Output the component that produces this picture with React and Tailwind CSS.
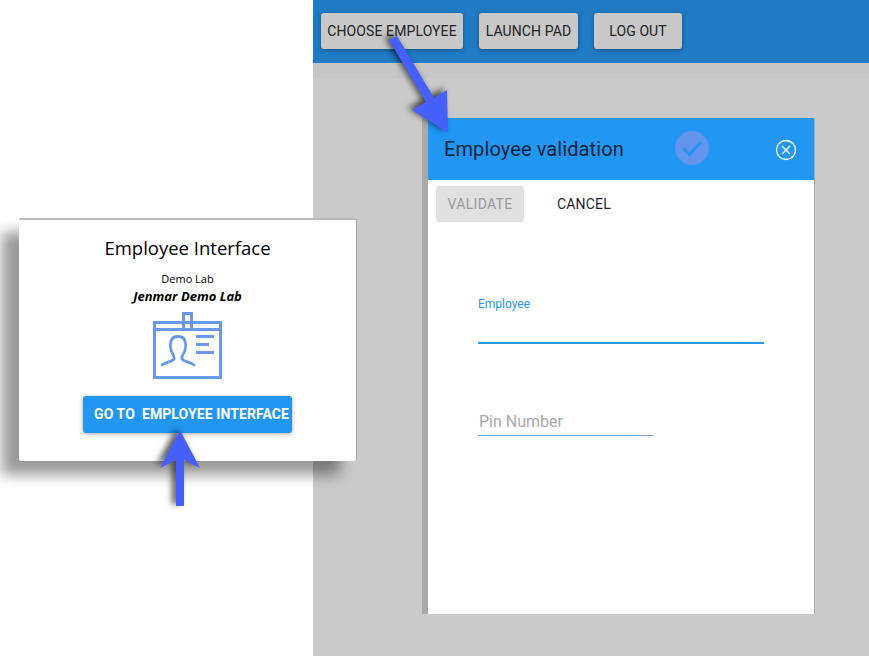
export default function App() {
  const roboto = "font-['Roboto',sans-serif]";
  return (
    <div className={`relative flex h-[656px] w-[869px] overflow-hidden bg-white ${roboto}`}>
      {/* left column with the card */}
      <div className="relative z-10 w-[313px] shrink-0 pl-[19px] pt-[218px]">
        <div className="flex h-[243px] w-[338px] flex-col items-center rounded-[2px] border-t-2 border-r border-t-[#b8b8b8] border-r-[#a8a8a8] bg-white shadow-[-17px_14px_14px_rgba(0,0,0,0.4)]">
          <div className="mt-[14px] font-['Open_Sans',sans-serif] text-[18.5px] leading-[28px] text-black">Employee Interface</div>
          <div className="mt-[9px] font-['Open_Sans',sans-serif] text-[11px] leading-[16px] text-black">Demo Lab</div>
          <div className="mt-[1px] font-['Open_Sans',sans-serif] text-[13px] font-bold italic leading-[16px] text-black">Jenmar Demo Lab</div>
          <svg className="mt-[8px] -ml-[1px]" width="70" height="68" viewBox="0 0 70 68" fill="none" stroke="#6699ee" strokeWidth="3">
            <rect x="2.5" y="10.5" width="66" height="55" />
            <path d="M2 17.5H31M41 17.5H69" />
            <rect x="31.5" y="1.5" width="8" height="16" />
            <path d="M44 24.5H62M44 32.5H57M44 40.5H62" strokeWidth="2.8" />
            <path d="M10 53c4-3 10-3 12-6 1-3-2-5-3-9-1-3-1-6 0-9 1-3 4-4.500 7-4.500s6 1.500 7 4.500c1 3 1 6 0 9-1 4-4 6-3 9 2 3 8 3 12 6" strokeWidth="2.8" strokeLinecap="round" />
          </svg>
          <button className="mt-[16px] flex h-[37px] w-[209px] items-center justify-end whitespace-pre rounded-[3px] bg-[#2196f3] pr-[3px] text-[14px] font-bold tracking-[0.08px] text-white shadow-[0_1px_4px_rgba(0,0,0,0.35)]">
            GO TO  EMPLOYEE INTERFACE
          </button>
        </div>
      </div>

      {/* right panel */}
      <div className="flex h-full flex-1 flex-col bg-[#cacaca]">
        <div className="flex h-[63px] items-start gap-4 bg-[#1f7bc4] pl-2 pt-[13px]">
          <button className="h-[36px] w-[142px] rounded-[3px] bg-[#c8c8c8] text-[14px] font-normal tracking-[0.1px] text-[#222] shadow-[0_1px_4px_rgba(0,0,0,0.35)]">CHOOSE EMPLOYEE</button>
          <button className="h-[36px] w-[99px] rounded-[3px] bg-[#c8c8c8] text-[14px] font-normal tracking-[0.1px] text-[#222] shadow-[0_1px_4px_rgba(0,0,0,0.35)]">LAUNCH PAD</button>
          <button className="h-[36px] w-[88px] rounded-[3px] bg-[#c8c8c8] text-[14px] font-normal tracking-[0.1px] text-[#222] shadow-[0_1px_4px_rgba(0,0,0,0.35)]">LOG OUT</button>
        </div>
        <div className="h-[15px] bg-[#c6c6c6]" />
        <div className="ml-[115px] mt-[40px] flex h-[496px] w-[387px] flex-col rounded-t-[2px] border-r border-[#a8a8a8] bg-white shadow-[-6px_0_0_#a9a9a9]">
          <div className="flex h-[62px] items-center bg-[#2196f3] pl-4 pr-[17px]">
            <div className="-mt-[1px] w-[231px] text-[20px] tracking-[0.1px] text-[#0d2338]">Employee validation</div>
            <div className="-mt-[2px] flex h-[34px] w-[34px] items-center justify-center rounded-full bg-[#6495ed]">
              <svg width="24" height="20" viewBox="0 0 24 20" fill="none" stroke="#2196f3" strokeWidth="3">
                <path d="M3 10l6.500 6.500L21 4" />
              </svg>
            </div>
            <svg className="ml-auto mt-[2px]" width="22" height="22" viewBox="0 0 22 22" fill="none" stroke="white">
              <circle cx="11" cy="11" r="9.500" strokeWidth="1.300" />
              <path d="M7 7l8 8M15 7l-8 8" strokeWidth="1.300" />
            </svg>
          </div>
          <div className="flex gap-4 px-2 pt-[6px]">
            <button className="h-[36px] w-[88px] rounded-[3px] bg-[#e0e0e0] text-[14px] font-normal tracking-[0.3px] text-[#9a9a9a]">VALIDATE</button>
            <button className="h-[36px] w-[88px] text-[14px] font-normal tracking-[0.2px] text-[#1f1f1f]">CANCEL</button>
          </div>
          <div className="pl-[50px] pt-[74px]">
            <div className="text-[12px] leading-[16px] text-[#2196f3]">Employee</div>
            <div className="mt-[30px] h-[2px] w-[286px] bg-[#2196f3]" />
            <div className="mt-[67px] w-[175px] border-b border-[#6f97d8] pb-[3px] pl-[1px] text-[16px] leading-[21px] text-[#a8a8a8]">Pin Number</div>
          </div>
        </div>
      </div>

      {/* annotation arrows */}
      <svg className="pointer-events-none absolute left-0 top-0 z-20 drop-shadow-[-4px_-2px_3px_rgba(0,0,0,0.65)]" width="869" height="656" viewBox="0 0 869 656" fill="#4560ff">
        <polygon points="389,40 397,36 434,98 447,90 448,133 412,110 426,102" />
        <polygon points="180,430 200,468 184,460 184,506 176,506 176,460 160,468" />
      </svg>
    </div>
  );
}
